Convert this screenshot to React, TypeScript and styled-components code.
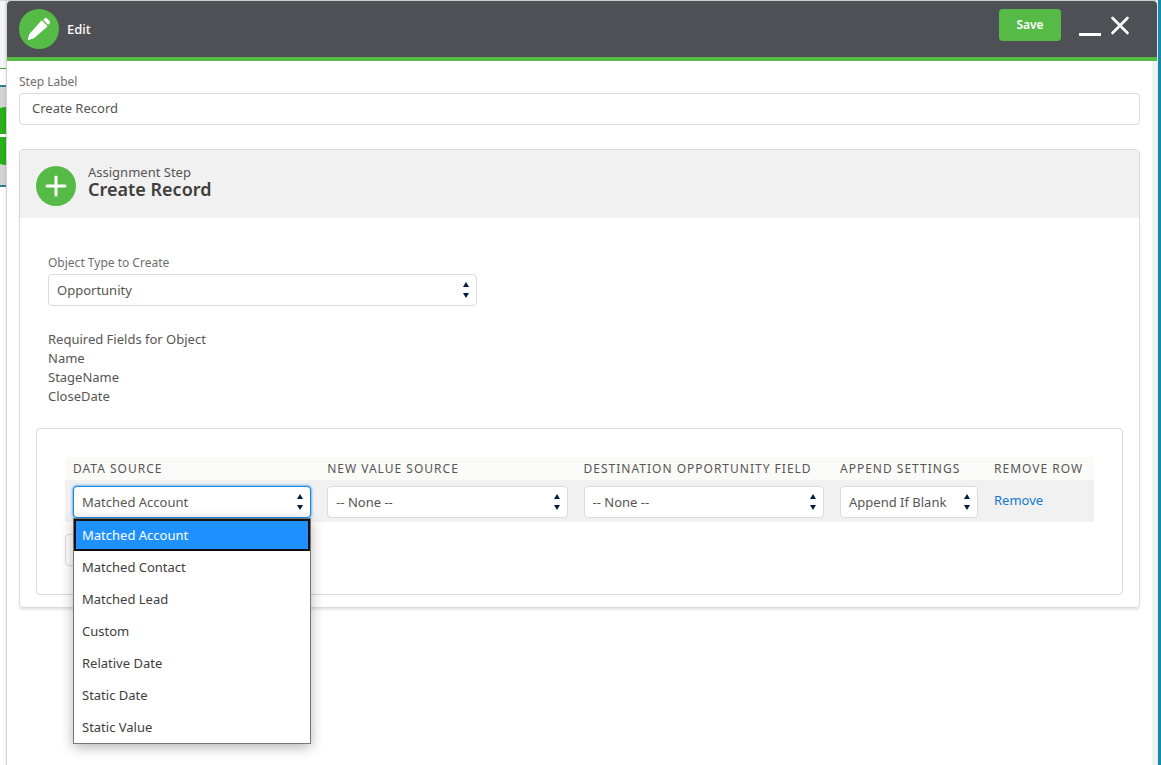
import React from "react";
import styled, { createGlobalStyle } from "styled-components";

const GlobalStyle = createGlobalStyle`
  *, *::before, *::after { box-sizing: border-box; }
  body {
    margin: 0;
    background: #fff;
    color: #575553;
    font: 13px/19px "Noto Sans", "Open Sans", sans-serif;
  }
  button, input, select { font: inherit; color: inherit; }
`;

const Page = styled.div`
  display: flex;
  min-height: 100vh;
  padding-top: 1px;
  background: linear-gradient(#d8d8d8 1px, transparent 1px);
`;

const CanvasEdge = styled.svg`
  flex: none;
  width: 6px;
  height: 190px;
`;

const BackdropEdge = styled.div`
  flex: none;
  width: 4px;
  margin-top: -1px;
  border-left: 1px solid #d8eaf0;
  background: #1589ae;
`;

const Modal = styled.section`
  flex: 1;
  min-width: 0;
  display: flex;
  flex-direction: column;
  border-left: 1px solid #d4d4d4;
  box-shadow: 0 0 3px rgba(0, 0, 0, 0.16);
`;

const ModalHeader = styled.header`
  display: flex;
  align-items: flex-start;
  height: 60px;
  padding: 8px 24px 0 12px;
  border-bottom: 4px solid #56ba47;
  border-radius: 4px 4px 0 0;
  background: #4f5055;
  color: #fff;
`;

const RoundIcon = styled.svg`
  flex: none;
  width: 40px;
  height: 40px;
  border-radius: 50%;
  background: #56ba47;
`;

const ModalTitle = styled.h1`
  flex: 1;
  margin: 0;
  padding-left: 8px;
  font-size: 13px;
  font-weight: 500;
  line-height: 40px;
`;

const SaveButton = styled.button`
  width: 62px;
  height: 32px;
  margin-right: 16px;
  padding: 0 0 2px;
  border: 0;
  border-radius: 4px;
  background: #56ba47;
  color: #fff;
  font-size: 12px;
  font-weight: 600;
`;

const WindowButton = styled.button`
  display: flex;
  width: 26px;
  height: 32px;
  padding: 0;
  border: 0;
  background: none;
  & + & { margin-left: 4px; }
`;

const ModalBody = styled.div`
  flex: 1;
  padding: 12px;
  border-right: 5px solid #f1f1f1;
`;

const Label = styled.label`
  display: block;
  font-size: 12px;
  line-height: 18px;
  padding-bottom: 2px;
  color: #706e6b;
`;

const TextInput = styled.input`
  display: block;
  width: 100%;
  height: 32px;
  padding: 0 12px 2px;
  border: 1px solid #dddbda;
  border-radius: 4px;
  background: #fff;
`;

const Card = styled.article`
  margin-top: 24px;
  border: 1px solid #dddbda;
  border-radius: 4px;
  box-shadow: 0 2px 2px rgba(0, 0, 0, 0.1);
`;

const CardHeader = styled.header`
  display: flex;
  gap: 12px;
  padding: 16px 16px 12px;
  background: #f1f1f1;
`;

const CardKicker = styled.p`
  margin: 0;
  line-height: 12px;
`;

const CardTitle = styled.h2`
  margin: 0;
  color: #3e3e3c;
  font-size: 18px;
  font-weight: 600;
  line-height: 22px;
`;

const CardBody = styled.div`
  padding: 36px 16px 12px;
`;

const ObjectSettings = styled.div`
  display: grid;
  grid-template-columns: 5fr 7fr;
  column-gap: 34px;
  padding: 0 12px;
`;

const RequiredFields = styled.div`
  padding: 24px 12px 22px;
  p, ul { margin: 0; padding: 0; list-style: none; }
`;

const SelectBox = styled.div`
  position: relative;
`;

const SelectControl = styled.select<{ $focused?: boolean }>`
  display: block;
  appearance: none;
  width: 100%;
  height: 32px;
  padding: 0 20px 0 8px;
  border: 1px solid ${(p) => (p.$focused ? "#1589ee" : "#dddbda")};
  border-radius: 4px;
  background: #fff;
  box-shadow: ${(p) => (p.$focused ? "0 0 3px #0070d2" : "none")};
`;

const SelectArrows = styled.svg`
  position: absolute;
  top: 8px;
  right: 7px;
  width: 8px;
  height: 16px;
  fill: #061c3f;
  pointer-events: none;
`;

const OptionList = styled.ul`
  position: absolute;
  z-index: 1;
  top: 100%;
  left: 0;
  right: 0;
  margin: 0;
  padding: 0;
  list-style: none;
  border: 1px solid #767676;
  background: #fff;
  box-shadow: 0 3px 12px rgba(0, 0, 0, 0.3);
`;

const OptionItem = styled.li`
  height: 32px;
  padding: 0 8px;
  line-height: 32px;
  color: #3e3e3c;
  &[aria-selected="true"] {
    background: #1e90ff;
    color: #fff;
    outline: 2px solid #101010;
    outline-offset: -2px;
  }
`;

const MappingPanel = styled.section`
  padding: 28px;
  border: 1px solid #dddbda;
  border-radius: 4px;
`;

const MappingTable = styled.table`
  width: 100%;
  table-layout: fixed;
  border-collapse: collapse;
`;

const HeadCell = styled.th<{ $width?: string }>`
  width: ${(p) => p.$width ?? "auto"};
  height: 23px;
  padding: 0 8px;
  background: #fafaf9;
  font-size: 12px;
  font-weight: 400;
  letter-spacing: 1px;
  line-height: 23px;
  text-align: left;
  text-transform: uppercase;
  white-space: nowrap;
`;

const Cell = styled.td`
  height: 42px;
  padding: 6px 8px 4px;
  background: #f1f1f1;
  vertical-align: top;
`;

const RemoveLink = styled.a`
  display: block;
  line-height: 28px;
  color: #1478d4;
  text-decoration: none;
`;

const AddRowButton = styled.button`
  display: block;
  width: 80px;
  height: 32px;
  margin-top: 12px;
  border: 1px solid #dddbda;
  border-radius: 4px;
  background: #fff;
`;

const dataSources = [
  "Matched Account",
  "Matched Contact",
  "Matched Lead",
  "Custom",
  "Relative Date",
  "Static Date",
  "Static Value",
];

type SelectProps = {
  options: string[];
  id?: string;
  label?: string;
  open?: boolean;
};

function Select({ options, id, label, open }: SelectProps) {
  return (
    <SelectBox>
      <SelectControl id={id} aria-label={label} $focused={open}>
        {options.map((o) => (
          <option key={o}>{o}</option>
        ))}
      </SelectControl>
      <SelectArrows viewBox="0 0 8 16" aria-hidden="true">
        <path d="M4 0 7 5H1zM4 16 1 11h6z" />
      </SelectArrows>
      {open && (
        <OptionList role="listbox" aria-label={label}>
          {options.map((o, i) => (
            <OptionItem key={o} role="option" aria-selected={i === 0}>
              {o}
            </OptionItem>
          ))}
        </OptionList>
      )}
    </SelectBox>
  );
}

export default function App() {
  return (
    <>
      <GlobalStyle />
      <Page>
        <CanvasEdge viewBox="0 0 6 190" aria-hidden="true">
          <path d="M0 0h6v67H0z" fill="#f4f5f8" />
          <path d="M0 67h6v1H0z" fill="#2bb01c" />
          <path d="M0 84h6v102H0z" fill="#2f7f9f" />
          <path d="M0 86h6v98H0z" fill="#d3d3d3" />
          <path d="M0 107q3-1 6-1v58q-3 0-6-1z" fill="#27b01a" />
          <path d="M0 133h6v3H0z" fill="#fff" />
        </CanvasEdge>
        <Modal aria-label="Edit">
          <ModalHeader>
            <RoundIcon viewBox="0 0 40 40" aria-hidden="true">
              <path
                fill="#fff"
                d="M22.200 11.800q.5-.5 1 0l5 5q.5.5 0 1L15.200 29q-.3.3-.7.4l-4.800 1.600q-1 .2-.8-.8l1.300-4.700q.1-.4.4-.7zM24.600 10.400l1-1q1.200-1.100 2.400 0l2.600 2.600q1.100 1.200 0 2.400l-1 1q-.4.4-.8 0l-4.200-4.200q-.4-.4 0-.8z"
              />
            </RoundIcon>
            <ModalTitle>Edit</ModalTitle>
            <SaveButton type="button">Save</SaveButton>
            <WindowButton type="button" aria-label="Minimize">
              <svg width="26" height="32" viewBox="0 0 26 32">
                <path d="M2 24h22v3H2z" fill="#fff" />
              </svg>
            </WindowButton>
            <WindowButton type="button" aria-label="Close">
              <svg width="26" height="32" viewBox="0 0 26 32">
                <path
                  d="M5.500 9l15 15M20.500 9l-15 15"
                  stroke="#fff"
                  strokeWidth="2.6"
                  strokeLinecap="round"
                />
              </svg>
            </WindowButton>
          </ModalHeader>
          <ModalBody>
            <Label htmlFor="step-label">Step Label</Label>
            <TextInput id="step-label" type="text" defaultValue="Create Record" />
            <Card>
              <CardHeader>
                <RoundIcon viewBox="0 0 40 40" aria-hidden="true">
                  <path
                    d="M20 11v18M11 20h18"
                    stroke="#fff"
                    strokeWidth="3"
                    strokeLinecap="round"
                  />
                </RoundIcon>
                <div>
                  <CardKicker>Assignment Step</CardKicker>
                  <CardTitle>Create Record</CardTitle>
                </div>
              </CardHeader>
              <CardBody>
                <ObjectSettings>
                  <div>
                    <Label htmlFor="object-type">Object Type to Create</Label>
                    <Select id="object-type" options={["Opportunity"]} />
                  </div>
                </ObjectSettings>
                <RequiredFields>
                  <p>Required Fields for Object</p>
                  <ul>
                    <li>Name</li>
                    <li>StageName</li>
                    <li>CloseDate</li>
                  </ul>
                </RequiredFields>
                <MappingPanel>
                  <MappingTable>
                    <thead>
                      <tr>
                        <HeadCell $width="24.7%">Data Source</HeadCell>
                        <HeadCell>New Value Source</HeadCell>
                        <HeadCell>Destination Opportunity Field</HeadCell>
                        <HeadCell $width="154px">Append Settings</HeadCell>
                        <HeadCell $width="108px">Remove Row</HeadCell>
                      </tr>
                    </thead>
                    <tbody>
                      <tr>
                        <Cell>
                          <Select label="Data Source" options={dataSources} open />
                        </Cell>
                        <Cell>
                          <Select label="New Value Source" options={["-- None --"]} />
                        </Cell>
                        <Cell>
                          <Select
                            label="Destination Opportunity Field"
                            options={["-- None --"]}
                          />
                        </Cell>
                        <Cell>
                          <Select label="Append Settings" options={["Append If Blank"]} />
                        </Cell>
                        <Cell>
                          <RemoveLink href="#remove">Remove</RemoveLink>
                        </Cell>
                      </tr>
                    </tbody>
                  </MappingTable>
                  <AddRowButton type="button" aria-label="Add Row" />
                </MappingPanel>
              </CardBody>
            </Card>
          </ModalBody>
        </Modal>
        <BackdropEdge />
      </Page>
    </>
  );
}
